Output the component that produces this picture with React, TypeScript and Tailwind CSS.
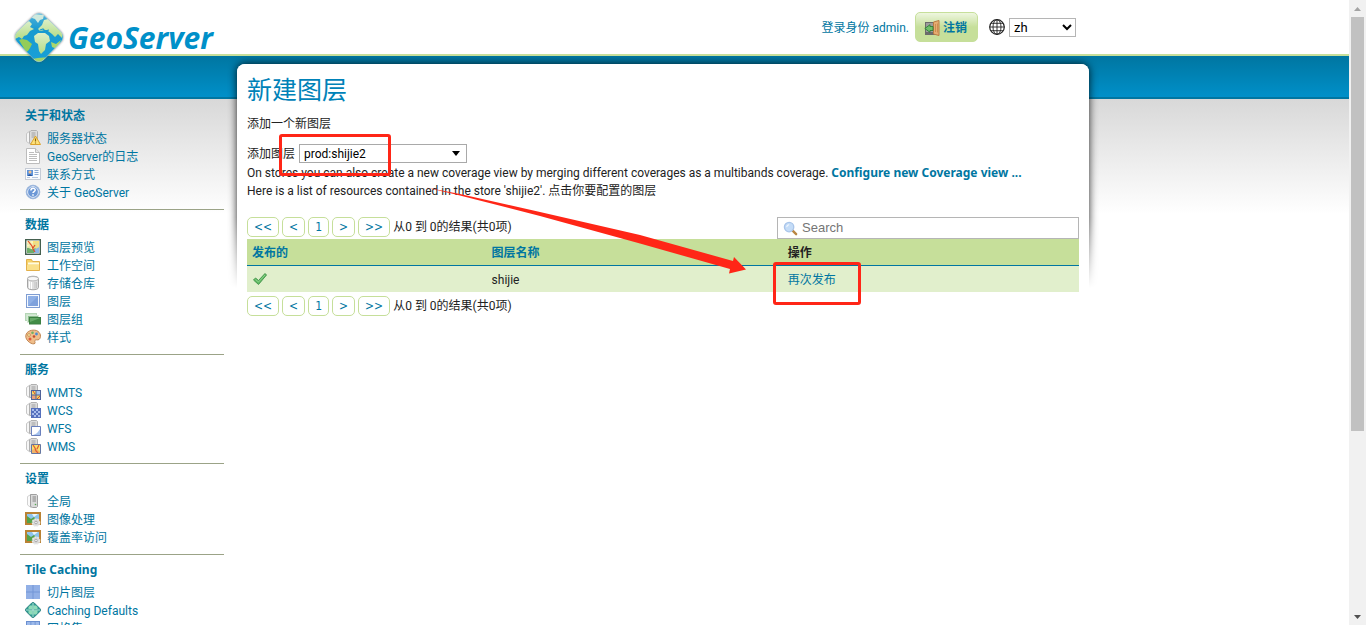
import type { ReactNode } from "react";

function Svg({ children, size = 16 }: { children: ReactNode; size?: number }) {
  return (
    <svg width={size} height={size} viewBox="0 0 16 16" className="shrink-0" aria-hidden="true">
      {children}
    </svg>
  );
}

function ServerBase() {
  return (
    <>
      <path d="M1.500 3.500 5 1v13L1.500 11.500z" fill="#f6f6f6" stroke="#c6c6c6" strokeLinejoin="round" />
      <path d="M4.500 2 6 .5h5.500l1 1V13l-1 1.500h-4l-3-1.500z" fill="#dcdcdc" stroke="#b0b0b0" />
      <path d="M6.500 3h4M6.500 5h4M6.500 7h4" stroke="#a0a0a0" />
    </>
  );
}

function StatusIcon() {
  return (
    <Svg>
      <ServerBase />
      <path d="M10.500 6 15.500 14.500h-10z" fill="#ffe27a" stroke="#dca32c" strokeLinejoin="round" />
      <path d="M10.500 8.500v3M10.500 12.500v1" stroke="#8a6410" strokeWidth="1.200" />
    </Svg>
  );
}

function LogsIcon() {
  return (
    <Svg>
      <path d="M1.500.5h9l4 4v11h-13z" fill="#fff" stroke="#bcbcbc" />
      <path d="M10.500.5v4h4" fill="#e6e6e6" stroke="#bcbcbc" />
      <path d="M4 4.500h5M4 6.500h8M4 8.500h8M4 10.500h8M4 12.500h8" stroke="#bdbdbd" />
    </Svg>
  );
}

function ContactIcon() {
  return (
    <Svg>
      <rect x=".5" y="2.500" width="15" height="11" fill="#f9fbfe" stroke="#c6ccd6" />
      <rect x="2" y="4" width="6" height="6" fill="#5b92db" />
      <circle cx="5" cy="6" r="1.500" fill="#f2c28d" />
      <path d="M3 10c0-2 4-2 4 0z" fill="#274f93" />
      <path d="M9.500 4.500h4M9.500 6.500h4M9.500 8.500h4" stroke="#8aa9d4" />
      <path d="M2 11.500h3M7 11.500h6" stroke="#b9c8de" />
    </Svg>
  );
}

function HelpIcon() {
  return (
    <Svg>
      <circle cx="8" cy="8" r="6.800" fill="#7c9fd2" stroke="#9db8dd" />
      <circle cx="8" cy="8" r="5.400" fill="#6b97d6" stroke="#e3ecf8" />
      <path d="M5.900 6.500c0-2.800 4.300-2.800 4.300-.4 0 1.500-2.200 1.500-2.200 3M8 10.200v1.500" fill="none" stroke="#fff" strokeWidth="1.500" />
    </Svg>
  );
}

function PreviewIcon() {
  return (
    <Svg>
      <rect x=".7" y=".7" width="14.600" height="14.600" fill="#fff" stroke="#45604f" strokeWidth="1.400" />
      <path d="M2 2h6v8H2z" fill="#fdf6bb" />
      <path d="M8 2h6v8H8z" fill="#fbdf78" />
      <path d="M2 9c3-1 4 2 6 1s3-1 6 1v3H2z" fill="#6fae6b" />
      <path d="M9 11l5-3v6H9z" fill="#8db6e8" />
      <path d="M2 5h12M2 8h12M5 2v8M11 2v8" stroke="#d5dba5" strokeWidth=".7" />
      <path d="m3 2 4 5 1 3 2 3M8 9l2-3" stroke="#e24a28" strokeWidth="1.200" fill="none" />
    </Svg>
  );
}

function FolderIcon() {
  return (
    <Svg>
      <path d="M1.500 13.500v-11h5l1 2h7v9z" fill="#f6d268" stroke="#e3b04a" />
      <path d="M3 6.500h11" stroke="#fffbe0" strokeWidth="2" />
      <path d="M2 8h12v5H2z" fill="#fae08a" />
    </Svg>
  );
}

function StoreIcon() {
  return (
    <Svg>
      <path d="M2.500 3.500c0-3 11-3 11 0v9c0 3-11 3-11 0z" fill="#dedede" stroke="#a5a5a5" />
      <ellipse cx="8" cy="3.700" rx="5.500" ry="2.200" fill="#f8f8f8" stroke="#b8b8b8" />
      <path d="M4.500 6.500v7M6.500 7v7" stroke="#fff" />
      <path d="M10 7v6.500M11.500 7v6" stroke="#c4c4c4" />
    </Svg>
  );
}

function LayerIcon() {
  return (
    <Svg>
      <rect x="1.500" y="1.500" width="13" height="13" fill="#f5f9ff" stroke="#7f9dd2" />
      <rect x="3" y="3" width="10" height="10" fill="#8fb0e6" />
      <path d="M3 13 13 3v10z" fill="#7ea1dc" />
    </Svg>
  );
}

function LayerGroupIcon() {
  return (
    <Svg>
      <rect x=".5" y="2.500" width="11" height="7" fill="#cde5cd" stroke="#b5d6b6" />
      <rect x="2.500" y="4.500" width="11" height="7" fill="#8cbd8d" stroke="#d7ead7" />
      <rect x="4.500" y="6.500" width="11" height="6.500" fill="#418c46" stroke="#3d8042" />
      <path d="M5 7h10L5 11z" fill="#66a968" />
    </Svg>
  );
}

function StyleIcon() {
  return (
    <Svg>
      <path d="M.8 6.500C1.500 2 7 .3 11.500 1.500c4.500 2 5 7 2.500 9-1.500 1-3-.4-4 .8-.8 1.200.5 2 0 3C8 16.500 0 12 .8 6.500z" fill="#f0be8a" stroke="#c08652" />
      <circle cx="4" cy="6" r="1.400" fill="#fff2a8" stroke="#b06f3b" strokeWidth=".6" />
      <circle cx="7.500" cy="3.700" r="1.300" fill="#72af61" />
      <circle cx="11.500" cy="5" r="1.400" fill="#4c8ed5" />
      <circle cx="5" cy="10" r="1.500" fill="#dd5a3e" />
      <circle cx="9" cy="7.500" r="1.300" fill="#c44d2e" />
    </Svg>
  );
}

function WmtsIcon() {
  return (
    <Svg>
      <ServerBase />
      <path d="M6 6h10v10H6z" fill="#506399" />
      <path d="M7 7h3.500v3.500H7z" fill="#f7dc68" />
      <path d="M11.500 7H15v3.500h-3.500z" fill="#a8c7ef" />
      <path d="M7 11.500h3.500V15H7z" fill="#e9a07a" />
      <path d="M11.500 11.500H15V15h-3.500z" fill="#f2cf62" />
      <path d="m8 7 2 3M12 15l3-3" stroke="#d94930" />
    </Svg>
  );
}

function WcsIcon() {
  return (
    <Svg>
      <ServerBase />
      <path d="M6 6h10v10H6z" fill="#5670bd" />
      <path d="M7 7h2v2H7zM11 7h2v2h-2zM9 9h2v2H9zM13 9h2v2h-2zM7 11h2v2H7zM11 11h2v2h-2zM9 13h2v2H9zM13 13h2v2h-2z" fill="#a9bdec" />
    </Svg>
  );
}

function WfsIcon() {
  return (
    <Svg>
      <ServerBase />
      <path d="M6.500 6.500h9v9h-9z" fill="#fff" stroke="#6a80bd" />
      <path d="M8 15c4-1 5-3 7-6v6z" fill="#a5c2ed" />
    </Svg>
  );
}

function WmsIcon() {
  return (
    <Svg>
      <ServerBase />
      <path d="M6.500 6.500h9v9h-9z" fill="#fae06c" stroke="#6577a3" />
      <path d="M7 12l4-2 4 4v1H7z" fill="#f0b469" />
      <path d="m8 7 2 3 1 3 2 2M12 11l2-4" stroke="#e05b31" fill="none" strokeWidth="1.200" />
    </Svg>
  );
}

function GlobalIcon() {
  return (
    <Svg>
      <path d="M2.500 3.500 6 1.500v13L2.500 12z" fill="#fafafa" stroke="#d2d2d2" />
      <path d="M5.500 1.500h6l1 1v11l-1 1h-4l-2-1z" fill="#dadada" stroke="#a0a0a0" />
      <path d="M7.500 4h3.500M7.500 6h3.500M7.500 8h3.500" stroke="#858585" />
      <circle cx="10.500" cy="11.500" r=".8" fill="#55a955" />
    </Svg>
  );
}

function ImageIcon() {
  return (
    <Svg>
      <path d="M1 2h14v11H1z" fill="#8dc4ec" stroke="#b98234" strokeWidth="2" />
      <path d="m2 5 4 3 3-2 5 5v1H2z" fill="#53a249" />
      <path d="M7 3h6L9 6z" fill="#e7f5fd" />
      <circle cx="11" cy="11.500" r="3.400" fill="#d4d4d4" stroke="#e6e6e6" strokeWidth="1.800" strokeDasharray="2 .8" />
      <circle cx="11" cy="11.500" r="1.200" fill="#fff" stroke="#aaa" />
    </Svg>
  );
}

function TilesIcon() {
  return (
    <Svg>
      <path d="M1 1h14v14H1z" fill="#7296d6" />
      <path d="M1 1h6.500v6.500H1zM8.500 1H15v6.500H8.500zM1 8.500h6.500V15H1zM8.500 8.500H15V15H8.500z" fill="#92b0e6" />
    </Svg>
  );
}

function CachingIcon() {
  return (
    <Svg>
      <path d="M6.500 1.200q1.500-1.400 3 0l5.300 5.300q1.400 1.500 0 3l-5.300 5.300q-1.500 1.400-3 0L1.200 9.500q-1.400-1.500 0-3z" fill="#2f9c94" stroke="#237e7e" />
      <path d="M5 3.500h2.500V7H3.500V5zM8.500 3.500H11L12.500 5v2h-4zM3.500 8.500h4v4H5L3.500 11zM8.500 8.500h4V11L11 12.500H8.500z" fill="#8fdcb8" />
      <path d="M8 1v14M1 8h14" stroke="#cef2de" strokeWidth=".8" />
    </Svg>
  );
}

function GridsetsIcon() {
  return (
    <Svg>
      <path d="M1 1h14v14H1z" fill="#6b8fd0" />
      <path d="M2 2h3.500v3.500H2zM6.300 2h3.400v3.500H6.300zM10.500 2H14v3.500h-3.500zM2 6.300h3.500v3.400H2zM6.300 6.300h3.400v3.400H6.300zM10.500 6.300H14v3.400h-3.500zM2 10.500h12V14H2z" fill="#9cb9ea" />
    </Svg>
  );
}

const sections: { title: string; items: { label: string; icon: ReactNode }[] }[] = [
  {
    title: "关于和状态",
    items: [
      { label: "服务器状态", icon: <StatusIcon /> },
      { label: "GeoServer的日志", icon: <LogsIcon /> },
      { label: "联系方式", icon: <ContactIcon /> },
      { label: "关于 GeoServer", icon: <HelpIcon /> },
    ],
  },
  {
    title: "数据",
    items: [
      { label: "图层预览", icon: <PreviewIcon /> },
      { label: "工作空间", icon: <FolderIcon /> },
      { label: "存储仓库", icon: <StoreIcon /> },
      { label: "图层", icon: <LayerIcon /> },
      { label: "图层组", icon: <LayerGroupIcon /> },
      { label: "样式", icon: <StyleIcon /> },
    ],
  },
  {
    title: "服务",
    items: [
      { label: "WMTS", icon: <WmtsIcon /> },
      { label: "WCS", icon: <WcsIcon /> },
      { label: "WFS", icon: <WfsIcon /> },
      { label: "WMS", icon: <WmsIcon /> },
    ],
  },
  {
    title: "设置",
    items: [
      { label: "全局", icon: <GlobalIcon /> },
      { label: "图像处理", icon: <ImageIcon /> },
      { label: "覆盖率访问", icon: <ImageIcon /> },
    ],
  },
  {
    title: "Tile Caching",
    items: [
      { label: "切片图层", icon: <TilesIcon /> },
      { label: "Caching Defaults", icon: <CachingIcon /> },
      { label: "网格集", icon: <GridsetsIcon /> },
    ],
  },
];

const diamond = "M22 4.500Q27 0 32 4.500L49 21Q53 26 49 31L32 48.500Q27 53 22 48.500L5 31Q1 26 5 21z";

function Logo() {
  return (
    <a href="#home" className="flex items-center gap-0.5 text-[#0090c9]">
      <svg width="54" height="54" viewBox="0 0 54 54" aria-hidden="true">
        <defs>
          <linearGradient id="sea" x1="0" y1="0" x2="0" y2="1">
            <stop offset="0" stopColor="#58b5dc" />
            <stop offset=".35" stopColor="#189ad0" />
            <stop offset="1" stopColor="#18a0d8" />
          </linearGradient>
          <linearGradient id="land" x1="0" y1="0" x2="0" y2="1">
            <stop offset="0" stopColor="#dcefc8" />
            <stop offset="1" stopColor="#b5dc86" />
          </linearGradient>
          <clipPath id="diamond">
            <path d={diamond} />
          </clipPath>
          <filter id="soft" x="-20%" y="-20%" width="140%" height="140%">
            <feGaussianBlur stdDeviation="1.200" />
          </filter>
        </defs>
        <path d={diamond} fill="#444" opacity=".8" filter="url(#soft)" />
        <g clipPath="url(#diamond)">
          <path d="M0 0h54v54H0z" fill="url(#sea)" />
          <path d="m21 3 11 1-1 4-3 1-2 3-3-4-3-1z" fill="#cfe9dc" />
          <path d="m3 20 9-7 5-3 3 3-2 3 4 2-4 2-3 4-3 1-2 3-3-2-4 2-2-4z" fill="url(#land)" />
          <path d="m7 29 3-1 5 1 5 4-2 4-2 3-2 1z" fill="#94cc58" />
          <path d="m30 14 2-5 4-1 15 13-1 6-4-4-3 3-3-3-4-3-3-1-5 1-2-2z" fill="url(#land)" />
          <path d="m28 19 3-1 2 2 4-1" stroke="#189ad0" strokeWidth="1.200" fill="none" />
          <path d="m22 25 4-3h7l4 3 1 5-4 3-1 6-4 4-2-3-1-7-3-2z" fill="url(#land)" />
          <path d="m39 31 5 2 5-4-4 9-5-2z" fill="#a9d66e" />
          <path d="M20 48q7-2 15-1.500L30 53h-6z" fill="#9fd368" />
        </g>
        <path d={diamond} fill="none" stroke="#d6eef7" strokeOpacity=".4" />
      </svg>
      <span className="font-['Open_Sans',sans-serif] text-[30px] leading-none font-bold italic">GeoServer</span>
    </a>
  );
}

function LogoutIcon() {
  return (
    <Svg>
      <path d="M1 2h10v13H1z" fill="#6b6b6b" />
      <path d="M2 3h7v9H2z" fill="#9c9c9c" />
      <path d="m9.500 2 5.500-1.500v15L9.500 14z" fill="#e6ac72" stroke="#b87c42" />
      <path d="M11.500 4v8M13.500 3.500v9" stroke="#cc8e50" />
      <path d="M6 6.500V4.700L.8 8.500 6 12.300v-1.800h3v-4z" fill="#6fc06a" stroke="#2d7f35" strokeWidth=".9" />
    </Svg>
  );
}

function LanguageIcon() {
  return (
    <svg width="16" height="16" viewBox="0 0 16 16" fill="none" stroke="#222" aria-hidden="true">
      <circle cx="8" cy="8" r="7.300" strokeWidth="1.200" />
      <ellipse cx="8" cy="8" rx="4" ry="7.300" strokeWidth=".9" />
      <path d="M8 .7v14.600M.7 8h14.600M1.800 4.300h12.400M1.800 11.700h12.400" strokeWidth=".9" />
    </svg>
  );
}

function SearchIcon() {
  return (
    <Svg size={15}>
      <path d="m10 10 4 4" stroke="#b98643" strokeWidth="2.600" strokeLinecap="round" />
      <circle cx="6.500" cy="6.500" r="5" fill="#c4dcf7" stroke="#a9c5ea" strokeWidth="1.400" />
      <path d="M4 6.500Q4 4 6.500 4" stroke="#fff" fill="none" />
    </Svg>
  );
}

function Pager() {
  return (
    <div className="flex h-5 items-center gap-[3px]">
      {["<<", "<", "1", ">", ">>"].map((label) => (
        <button
          key={label}
          type="button"
          className="h-5 rounded-[5px] border border-[#c6df9a] bg-white px-1.5 font-['DejaVu_Sans_Condensed',sans-serif] text-[#0076a1]"
        >
          {label}
        </button>
      ))}
      <span>从0 到 0的结果(共0项)</span>
    </div>
  );
}

function Header() {
  return (
    <header className="relative z-10 flex h-14 shrink-0 items-start border-b-2 border-[#c6df9a] bg-white">
      <div className="flex w-full max-w-[1089px] items-start justify-between pr-[13px]">
        <div className="pt-[11px] pl-3">
          <Logo />
        </div>
        <div className="flex items-center pt-3">
          <span className="mr-1.5 pt-0.5 text-[#0076a1]">登录身份 admin.</span>
          <button
            type="button"
            className="mr-[11px] flex h-[30px] items-center gap-[3px] rounded-[5px] border border-[#c6df9a] bg-linear-to-b from-[#eef6df] to-[#c6df9a] to-50% px-2 pt-0.5 pr-2.5 font-bold text-[#0076a1]"
          >
            <LogoutIcon />
            注销
          </button>
          <LanguageIcon />
          <select
            aria-label="Language"
            defaultValue="zh"
            className="ml-1 h-[19px] w-[67px] border border-[#b5b5b5] bg-white text-[13px] leading-4 text-black"
          >
            <option value="zh">zh</option>
            <option value="en">en</option>
          </select>
        </div>
      </div>
    </header>
  );
}

function Sidebar() {
  return (
    <nav className="w-[237px] shrink-0 pt-[45px] pr-[13px] pl-5 text-[#0076a1]">
      {sections.map((section) => (
        <section key={section.title} className="border-b border-[#9ba387] pt-[5px] pb-[7px] pl-[5px]">
          <h2 className="mb-1 h-5 font-['Noto_Sans','Noto_Sans_CJK_SC',sans-serif] leading-5 font-bold">{section.title}</h2>
          <ul>
            {section.items.map((item) => (
              <li key={item.label}>
                <a href="#menu" className="flex h-[18px] items-start gap-1.5">
                  {item.icon}
                  <span>{item.label}</span>
                </a>
              </li>
            ))}
          </ul>
        </section>
      ))}
    </nav>
  );
}

function LayerTable() {
  return (
    <table className="w-full table-fixed border-collapse text-left">
      <colgroup>
        <col className="w-[28.8%]" />
        <col className="w-[35.6%]" />
        <col />
      </colgroup>
      <thead>
        <tr className="h-[26px] border-b border-[#0076a1] bg-[#c6df9a] text-[#0076a1]">
          <th className="px-[5px] pt-0.5">
            <a href="#published">发布的</a>
          </th>
          <th className="px-[5px] pt-0.5">
            <a href="#name">图层名称</a>
          </th>
          <th className="px-[5px] pt-0.5 text-[#222]">操作</th>
        </tr>
      </thead>
      <tbody>
        <tr className="h-[27px] bg-[#e1efcc]">
          <td className="px-[5px]">
            <Svg>
              <path d="m1.500 9 2-2 3 2.500L13 2.500l1.500 1.500-8 9.500z" fill="#5cb85f" stroke="#4a9a50" strokeLinejoin="round" />
              <path d="m3.500 8.500 3 2.500L13 4" fill="none" stroke="#8bd48a" />
            </Svg>
          </td>
          <td className="px-[5px] pt-0.5">shijie</td>
          <td className="px-[5px] pt-0.5">
            <a href="#publish" className="text-[#0076a1]">再次发布</a>
          </td>
        </tr>
      </tbody>
    </table>
  );
}

function Panel() {
  return (
    <main className="relative mt-2 max-w-[852px] min-w-0 flex-1">
      <div className="absolute -inset-x-3 -top-3 h-[236px] overflow-hidden mask-b-from-70% mask-b-to-100%">
        <div className="mx-3 mt-3 h-[260px] rounded-lg bg-white shadow-[0_0_9px_rgba(0,0,0,0.85)]" />
      </div>
      <div className="relative rounded-t-lg bg-white px-2.5 pt-[11px] text-[#222]">
        <h1 className="mb-2 text-[25px] leading-8 text-[#0082b8]">新建图层</h1>
        <p className="mb-[11px]">添加一个新图层</p>
        <div className="flex h-5 items-start gap-1">
          <label htmlFor="store" className="leading-5">添加图层</label>
          <div className="relative">
            <select
              id="store"
              defaultValue="prod:shijie2"
              className="block h-[19px] w-[168px] appearance-none border border-[#a9a9a9] bg-white px-1 pt-px leading-4 text-black"
            >
              <option>prod:shijie2</option>
            </select>
            <svg width="8" height="5" viewBox="0 0 8 5" className="pointer-events-none absolute top-[7px] right-[7px]" aria-hidden="true">
              <path d="M0 0h8L4 5z" fill="#000" />
            </svg>
          </div>
        </div>
        <p>
          On stores you can also create a new coverage view by merging different coverages as a multibands coverage.{" "}
          <a href="#coverage" className="font-['Noto_Sans',sans-serif] font-bold text-[#0076a1]">Configure new Coverage view ...</a>
        </p>
        <p>Here is a list of resources contained in the store 'shijie2'. 点击你要配置的图层</p>
        <div className="mt-[17px] flex items-start justify-between">
          <Pager />
          <label className="flex h-[22px] w-[302px] items-center gap-1 border border-[#b5b5b5] bg-white pl-[5px]">
            <SearchIcon />
            <input
              type="text"
              aria-label="Search"
              placeholder="Search"
              className="min-w-0 flex-1 font-['Liberation_Sans',sans-serif] text-[13px] outline-none placeholder:text-[#757575]"
            />
          </label>
        </div>
        <LayerTable />
        <div className="mt-1">
          <Pager />
        </div>
      </div>
      <svg width="852" height="260" viewBox="237 64 852 260" className="pointer-events-none absolute top-0 left-0" aria-hidden="true">
        <rect x="280.500" y="135.500" width="109" height="39" rx="1.500" fill="none" stroke="#ff2617" strokeWidth="3" />
        <rect x="774.500" y="263.500" width="85" height="40" rx="1.500" fill="none" stroke="#ff2617" strokeWidth="3" />
        <path d="M426 187.500 460 194 540 212 640 235 733 261 734 257 746 269.500 729 273.500 730 269 640 243.500 540 216 460 195.500z" fill="#ff2617" />
      </svg>
    </main>
  );
}

function ScrollRail() {
  return (
    <div className="flex w-[17px] shrink-0 flex-col items-center bg-[#f1f1f1]" aria-hidden="true">
      <div className="flex h-[17px] items-center">
        <svg width="7" height="4" viewBox="0 0 7 4"><path d="M0 4h7L3.500 0z" fill="#a3a3a3" /></svg>
      </div>
      <div className="flex w-[13px] flex-1 flex-col">
        <div className="h-[70%] bg-[#c1c1c1]" />
      </div>
      <div className="flex h-[17px] items-center">
        <svg width="7" height="4" viewBox="0 0 7 4"><path d="M0 0h7L3.500 4z" fill="#505050" /></svg>
      </div>
    </div>
  );
}

export default function App() {
  return (
    <div className="flex h-screen overflow-hidden bg-white font-['Roboto','Noto_Sans_CJK_SC',sans-serif] text-[12px] leading-[18px]">
      <div className="flex min-w-0 flex-1 flex-col overflow-hidden">
        <Header />
        <div className="flex min-h-0 flex-1 items-start bg-[linear-gradient(to_bottom,#0076a1_0,#0090c9_41px,#0076a1_41px,#0076a1_43px,#d8d8d8_43px,#ffffff_158px)]">
          <Sidebar />
          <Panel />
        </div>
      </div>
      <ScrollRail />
    </div>
  );
}
